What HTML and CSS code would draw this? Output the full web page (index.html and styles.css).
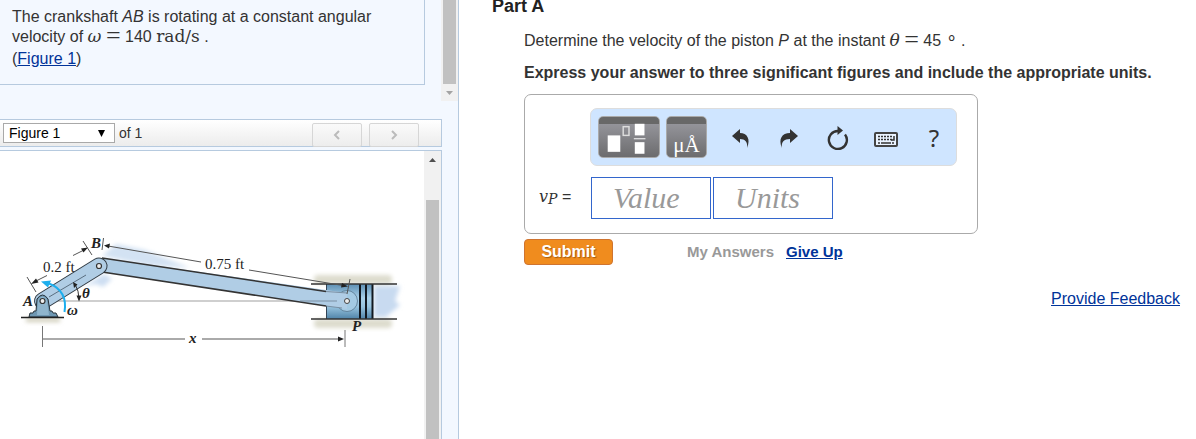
FILE: index.html
```html
<!DOCTYPE html>
<html lang="en">
<head>
    <meta charset="UTF-8">
    <meta name="viewport" content="width=device-width, initial-scale=1.0">
    <title>Part A</title>
    <link rel="stylesheet" href="styles.css">
</head>
<body>
    <div class="page">
        <aside class="sidebar">
            <div class="intro">
                <div class="problem">
                    <p>The crankshaft <i>AB</i> is rotating at a constant angular velocity of <i class="math">ω</i> <span class="equals">=</span> 140 <span class="math">rad/s</span> .</p>
                    <p class="figure-link">(<a href="#figure">Figure 1</a>)</p>
                </div>
                <div class="scrollbar">
                    <div class="thumb"></div>
                    <svg class="scroll-arrow" viewBox="0 0 17 17"><path d="M5 7h7L8.500 11z" fill="#a3a3a3"/></svg>
                </div>
            </div>

            <div class="figure-bar">
                <select class="figure-select" id="figureSelect" aria-label="Figure">
                    <option>Figure 1</option>
                </select>
                <label for="figureSelect">of 1</label>
                <div class="figure-nav">
                    <button type="button" aria-label="Previous figure"><svg viewBox="0 0 10 12"><path d="M7 2L3 6l4 4"/></svg></button>
                    <button type="button" aria-label="Next figure"><svg viewBox="0 0 10 12"><path d="M3 2l4 4-4 4"/></svg></button>
                </div>
            </div>

            <div class="figure-panel" id="figure">
                <div class="figure-content">
                    <svg class="drawing" viewBox="0 151 424 210">
                        <defs>
                            <filter id="soft" x="-30%" y="-30%" width="160%" height="160%"><feGaussianBlur stdDeviation="2"/></filter>
                            <linearGradient id="piston" x1="0" y1="0" x2="0" y2="1">
                                <stop offset="0" stop-color="#5d8fb3"/>
                                <stop offset="0.4" stop-color="#a9d0e8"/>
                                <stop offset="0.65" stop-color="#97c3de"/>
                                <stop offset="1" stop-color="#4f83a8"/>
                            </linearGradient>
                        </defs>

                        <!-- motion shading and ground -->
                        <g filter="url(#soft)">
                            <path d="M102 256L116 244L145 250L190 268L150 266z" fill="#d3e2f3"/>
                            <path d="M84 286L104 274L112 279L103 287L96 284z" fill="#cddef2"/>
                            <path d="M374 286H400L395 301L400 305L386 317H374z" fill="#c8daf0"/>
                            <rect x="314" y="275" width="78" height="9" rx="4" fill="#dddccd"/>
                            <rect x="314" y="319" width="78" height="9" rx="4" fill="#dddccd"/>
                            <rect x="26" y="318" width="34" height="4" fill="#cfccb8"/>
                        </g>

                        <!-- centre line and x dimension -->
                        <path d="M42 301H326" stroke="#cfcfcf" stroke-width="2"/>
                        <path d="M42 339H185M202 339H338" stroke="#aaa" stroke-width="2"/>
                        <path d="M42.500 326V347M345 330V347" stroke="#777"/>
                        <path d="M344 339L338 336.500V341.500z" fill="#222"/>

                        <!-- piston -->
                        <rect x="326" y="284" width="47" height="35" fill="url(#piston)"/>
                        <path d="M326.500 284V319" stroke="#345" />
                        <path d="M360 284V319M366 284V319M372.500 284V319" stroke="#111820" stroke-width="2"/>
                        <path d="M311 284H397M311 319H397" stroke="#333" stroke-width="1.500"/>

                        <!-- connecting rod -->
                        <circle cx="347" cy="301" r="10.500" fill="#a4cae3" stroke="#4d6c83" stroke-width="0.700"/>
                        <path d="M102 258L347 293V309L102 272z" fill="#b0cde5"/>
                        <path d="M102 258L326 291.500M102 272L326 306" stroke="#333" stroke-width="1.500"/>
                        <path d="M326 291.500L347 293M326 306L342 308M300 301H337" stroke="#678" stroke-width="0.700"/>
                        <circle cx="347" cy="301" r="2.500" fill="#eee" stroke="#444"/>

                        <!-- crank -->
                        <path d="M42.500 301L99 266" stroke="#333d46" stroke-width="17" stroke-linecap="round"/>
                        <path d="M42.500 301L99 266" stroke="#b0cde5" stroke-width="15" stroke-linecap="round"/>
                        <path d="M49 297L86 275" stroke="#456" stroke-width="0.800"/>
                        <circle cx="99" cy="266" r="2.500" fill="#eee" stroke="#333" stroke-width="1.200"/>

                        <!-- support -->
                        <path d="M29 317L30 313H33L34 311H36L37 299Q42.500 291 48 299L50 311H52L53 313H56L58 317z" fill="#6f98b3" stroke="#26323b"/>
                        <path d="M37 315L38 300Q42.500 293 47 300L49 315z" fill="#8fb5cd"/>
                        <path d="M21 317.500H64" stroke="#222" stroke-width="1.500"/>
                        <circle cx="42.500" cy="301" r="2.500" fill="#eee" stroke="#333" stroke-width="1.200"/>

                        <!-- length dimensions -->
                        <path d="M27 277L36 292M83 241L92 255M103.500 238L102 250M350 279L347 294" stroke="#555"/>
                        <path d="M47 275.500L34 282M73 255.500L85 249.500M108 246L201 262M249 270L343 285.500" stroke="#555"/>
                        <path d="M31 284L36 278.500L38.500 282.500zM88 247.500L81 248.500L83.500 252.500zM104 245.500L110 243.500L109 248.500zM348 286.500L342 283L341 287.500z" fill="#222"/>

                        <!-- angle and rotation -->
                        <path d="M75 284Q79 291 79 299" stroke="#333" fill="none"/>
                        <path d="M73 282L77.500 284.500L74 288zM79 301.500L76.500 295.500H81.500z" fill="#222"/>
                        <path d="M64.500 312Q68 291 49 283.500" stroke="#1daeed" stroke-width="2" fill="none"/>
                        <path d="M41 281.500L51 280.500L48 287.500z" fill="#1daeed"/>

                        <g class="lengths">
                            <text x="43" y="272">0.2 ft</text>
                            <text x="205" y="269">0.75 ft</text>
                        </g>
                        <g class="points">
                            <text x="91" y="248">B</text>
                            <text x="23" y="306">A</text>
                            <text x="82" y="298">θ</text>
                            <text x="67" y="315">ω</text>
                            <text x="352" y="331">P</text>
                            <text x="189" y="343">x</text>
                        </g>
                    </svg>
                </div>
                <div class="scrollbar">
                    <svg class="scroll-arrow" viewBox="0 0 17 17"><path d="M5 11h7L8.500 7z" fill="#505050"/></svg>
                    <div class="thumb thumb-lower"></div>
                </div>
            </div>
        </aside>

        <main class="main">
            <h2>Part A</h2>
            <div class="part">
                <p class="question">Determine the velocity of the piston <i>P</i> at the instant <i class="math">θ</i> <span class="equals">=</span> 45 <span class="degree">∘</span> .</p>
                <p class="instruction">Express your answer to three significant figures and include the appropriate units.</p>

                <form class="answer" id="answerForm">
                    <div class="toolbar">
                        <button type="button" class="tool templates" aria-label="Templates">
                            <svg viewBox="0 0 62 42">
                                <rect x="9" y="19" width="13" height="17"/>
                                <rect x="25" y="10" width="6" height="9" fill="none" stroke="#ddd" stroke-width="1.500"/>
                                <rect x="37" y="7" width="10" height="12"/>
                                <rect x="36" y="22" width="12" height="1"/>
                                <rect x="37" y="26" width="10" height="12"/>
                            </svg>
                        </button>
                        <button type="button" class="tool symbols">μÅ</button>
                        <div class="actions">
                            <button type="button" aria-label="Undo"><svg viewBox="0 0 24 24"><path d="M3 10L11 3v4c7 0 11 6 7 15 1-6-2-9-7-9v4z"/></svg></button>
                            <button type="button" aria-label="Redo"><svg viewBox="0 0 24 24"><path d="M21 10L13 3v4c-8 0-12 6-8 15-1-6 2-9 8-9v4z"/></svg></button>
                            <button type="button" aria-label="Reset"><svg viewBox="0 0 24 24"><path d="M19 8.500A9 9 0 1 1 12 5" fill="none" stroke="#333" stroke-width="2.400"/><path d="M11.500 0l5.500 4.500L11.500 9z"/></svg></button>
                            <button type="button" aria-label="Keyboard"><svg viewBox="0 0 24 24"><rect x="1" y="7" width="22" height="13" rx="1" fill="#eaf3ff" stroke="#444" stroke-width="2"/><path d="M4 10.500h14M4 13.500h14M4 17h2m12 0h2" stroke="#333" stroke-width="1.500" stroke-dasharray="2 1"/><path d="M7 17h10M20 10v4h-3" fill="none" stroke="#333" stroke-width="1.500"/></svg></button>
                            <button type="button" class="help" aria-label="Help">?</button>
                        </div>
                    </div>
                    <div class="entry">
                        <label for="value"><span class="symbol">v<small>P</small></span> =</label>
                        <input type="text" id="value" placeholder="Value">
                        <input type="text" id="units" placeholder="Units" aria-label="Units">
                    </div>
                </form>

                <div class="submit-row">
                    <button type="submit" form="answerForm" class="submit">Submit</button>
                    <span class="my-answers">My Answers</span>
                    <a href="#">Give Up</a>
                </div>
            </div>
            <a class="feedback" href="#">Provide Feedback</a>
        </main>
    </div>
</body>
</html>
```
FILE: styles.css
```css
* {
    box-sizing: border-box;
}

body {
    margin: 0;
    font-family: "Liberation Sans", Arial, sans-serif;
    font-size: 16px;
    line-height: 20px;
    color: #333;
    background: #fff;
}

p, h2 {
    margin: 0;
}

a {
    color: #039;
}

button, input, select {
    font-family: inherit;
    margin: 0;
}

button {
    cursor: pointer;
}

.page {
    display: grid;
    grid-template-columns: minmax(300px, 459px) 1fr;
    min-height: 100vh;
}

.math {
    font-family: "DejaVu Serif", serif;
    font-size: 17px;
    line-height: 16px;
}

.equals {
    font-family: "Liberation Serif", serif;
    font-size: 26px;
    line-height: 16px;
    vertical-align: -2px;
}

/* Left column */
.sidebar {
    display: flex;
    flex-direction: column;
    background: #f3f8ff;
    border-right: 1px solid #b6cadf;
}

.intro {
    display: flex;
    justify-content: space-between;
    align-items: flex-start;
    margin-bottom: 18px;
}

.problem {
    flex: 1;
    margin-right: 16px;
    padding: 7px 32px 15px 12px;
    border: solid #b6cadf;
    border-width: 0 1px 1px 0;
}

.figure-link {
    margin-top: 2px;
}

.scrollbar {
    display: flex;
    flex-direction: column;
    flex: 0 0 17px;
    align-self: stretch;
    background: #f1f1f1;
}

.intro .scrollbar {
    min-height: 101px;
}

.thumb {
    flex: 1;
    margin: 0 2px;
    background: #c1c1c1;
}

.thumb-lower {
    margin-top: 32px;
}

.scroll-arrow {
    width: 17px;
    height: 17px;
}

.figure-bar {
    display: flex;
    align-items: flex-start;
    height: 28px;
    margin: 0 16px 3px 0;
    padding: 3px 22px 0 3px;
    border: 1px solid #b6cadf;
    border-left: 0;
    background: linear-gradient(#fff, #ececec);
    font-size: 14px;
}

.figure-select {
    appearance: none;
    width: 112px;
    height: 20px;
    margin-right: 4px;
    padding: 0 5px;
    border: 1px solid #a9a9a9;
    border-radius: 0;
    background: #fff url("data:image/svg+xml,%3Csvg xmlns='http://www.w3.org/2000/svg' viewBox='0 0 7 7'%3E%3Cpath d='M0 0h7L3.500 7z'/%3E%3C/svg%3E") no-repeat right 9px center / 7px 7px;
    font-size: 14px;
    color: #000;
}

.figure-nav {
    display: flex;
    gap: 7px;
    margin-left: auto;
}

.figure-nav button {
    width: 50px;
    height: 24px;
    padding: 0;
    border: 1px solid #d6d6d6;
    border-radius: 2px;
    background: linear-gradient(#fafafa, #ededed);
}

.figure-nav svg {
    display: block;
    width: 10px;
    height: 12px;
    margin: 0 auto;
    fill: none;
    stroke: #bbb;
    stroke-width: 2;
}

.figure-panel {
    display: flex;
    flex: 1;
    margin-right: 16px;
    border: solid #b6cadf;
    border-width: 1px 1px 0 0;
    background: #fff;
}

.figure-content {
    flex: 1;
}

.drawing {
    display: block;
    width: 100%;
}

.drawing text {
    font-family: "Liberation Serif", serif;
    font-size: 15px;
    fill: #222;
}

.points text {
    font-style: italic;
    font-weight: bold;
}

/* Right column */
.main {
    padding: 0 16px 0 33px;
}

h2 {
    margin-top: -4px;
    font-size: 18px;
    color: #222;
}

.part {
    padding-left: 32px;
}

.question {
    margin-top: 15px;
}

.degree {
    font-size: 18px;
    vertical-align: 3px;
    line-height: 10px;
}

.instruction {
    margin: 12px 0 11px;
    font-weight: bold;
}

.answer {
    max-width: 454px;
    padding: 13px 20px 14px 14px;
    border: 1px solid #aaa;
    border-radius: 7px;
}

.toolbar {
    display: flex;
    align-items: center;
    height: 58px;
    margin-left: 51px;
    padding: 0 7px;
    border: 1px solid #ddd;
    border-radius: 7px;
    background: #cfe5ff;
}

.tool {
    height: 42px;
    padding: 0;
    border: 1px solid #aaa;
    border-radius: 5px;
    background: linear-gradient(#686868 0 7px, #94949a 7px, #6c6c6e);
    color: #fff;
}

.templates {
    width: 62px;
    margin-right: 6px;
}

.templates svg {
    display: block;
    fill: #fff;
}

.symbols {
    width: 41px;
    padding-top: 16px;
    font-family: "Liberation Serif", serif;
    font-size: 21px;
    line-height: 24px;
}

.actions {
    display: flex;
    flex: 1;
    justify-content: space-between;
    margin: 2px 3px 0 22px;
}

.actions button {
    width: 24px;
    height: 24px;
    padding: 0;
    border: 0;
    background: none;
    color: #333;
}

.actions svg {
    display: block;
    fill: #333;
}

.actions .help {
    font-family: "Noto Sans", sans-serif;
    font-size: 24px;
    line-height: 24px;
}

.entry {
    display: flex;
    align-items: center;
    gap: 2px;
    margin-top: 11px;
}

.entry label {
    width: 50px;
    font-size: 16px;
}

.symbol {
    font-family: "DejaVu Serif", serif;
    font-size: 16px;
    font-style: italic;
}

.symbol small {
    font-size: 14px;
    vertical-align: -2px;
}

.entry input {
    width: 120px;
    height: 42px;
    padding: 0 21px;
    border: 1px solid #36c;
    font-family: "Liberation Serif", serif;
    font-size: 30px;
    font-style: italic;
}

.entry input::placeholder {
    color: #999;
}

.submit-row {
    display: flex;
    align-items: center;
    margin-top: 5px;
    font-size: 15px;
    font-weight: bold;
}

.submit {
    width: 89px;
    height: 26px;
    margin-right: 74px;
    padding: 0;
    border: 1px solid #cf7430;
    border-radius: 4px;
    background: #f08c1e;
    color: #fff;
    font-size: 16px;
    font-weight: bold;
    text-shadow: 1px 1px 1px #a65c10;
}

.my-answers {
    margin-right: 12px;
    color: #999;
}

.feedback {
    display: block;
    margin-top: 24px;
    text-align: right;
}
```
